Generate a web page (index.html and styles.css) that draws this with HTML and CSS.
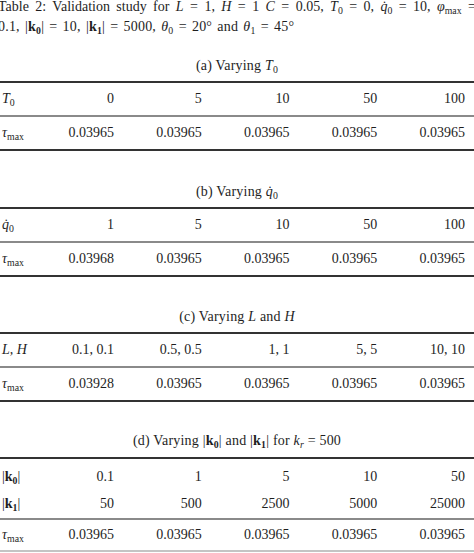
FILE: index.html
```html
<!DOCTYPE html>
<html>
<head>
<meta charset="utf-8">
<link rel="stylesheet" href="styles.css">
</head>
<body>
<div class="page">
  <div class="caption">
    <div class="line1">Table 2: Validation study for <i>L</i> = 1, <i>H</i> = 1 <i>C</i> = 0.05, <i>T</i><sub>0</sub> = 0, <i>q̇</i><sub>0</sub> = 10, <i>φ</i><sub>max</sub> =</div>
    <div class="line2">0.1, |<b>k<sub>0</sub></b>| = 10, |<b>k<sub>1</sub></b>| = 5000, <i>θ</i><sub>0</sub> = 20° and <i>θ</i><sub>1</sub> = 45°</div>
  </div>

  <div class="subcap sub-a">(a) Varying <i>T</i><sub>0</sub></div>
  <div class="tbl">
    <div class="row head"><span class="lbl"><i>T</i><sub>0</sub></span><span>0</span><span>5</span><span>10</span><span>50</span><span>100</span></div>
    <div class="row foot"><span class="lbl"><i>τ</i><sub>max</sub></span><span>0.03965</span><span>0.03965</span><span>0.03965</span><span>0.03965</span><span>0.03965</span></div>
  </div>

  <div class="subcap sub-b">(b) Varying <i>q̇</i><sub>0</sub></div>
  <div class="tbl">
    <div class="row head"><span class="lbl"><i>q̇</i><sub>0</sub></span><span>1</span><span>5</span><span>10</span><span>50</span><span>100</span></div>
    <div class="row foot"><span class="lbl"><i>τ</i><sub>max</sub></span><span>0.03968</span><span>0.03965</span><span>0.03965</span><span>0.03965</span><span>0.03965</span></div>
  </div>

  <div class="subcap sub-c">(c) Varying <i>L</i> and <i>H</i></div>
  <div class="tbl">
    <div class="row head"><span class="lbl"><i>L, H</i></span><span>0.1, 0.1</span><span>0.5, 0.5</span><span>1, 1</span><span>5, 5</span><span>10, 10</span></div>
    <div class="row foot"><span class="lbl"><i>τ</i><sub>max</sub></span><span>0.03928</span><span>0.03965</span><span>0.03965</span><span>0.03965</span><span>0.03965</span></div>
  </div>

  <div class="subcap sub-d">(d) Varying |<b>k<sub>0</sub></b>| and |<b>k<sub>1</sub></b>| for <i>k</i><sub><i>r</i></sub> = 500</div>
  <div class="tbl last">
    <div class="row r1"><span class="lbl">|<b>k<sub>0</sub></b>|</span><span>0.1</span><span>1</span><span>5</span><span>10</span><span>50</span></div>
    <div class="row r2"><span class="lbl">|<b>k<sub>1</sub></b>|</span><span>50</span><span>500</span><span>2500</span><span>5000</span><span>25000</span></div>
    <div class="row foot"><span class="lbl"><i>τ</i><sub>max</sub></span><span>0.03965</span><span>0.03965</span><span>0.03965</span><span>0.03965</span><span>0.03965</span></div>
  </div>
</div>
</body>
</html>
```

FILE: styles.css
```css
html, body {
  margin: 0;
  padding: 0;
  background: #ffffff;
  overflow: hidden;
}

body {
  font-family: "Liberation Serif", "Times New Roman", serif;
  font-size: 14px;
  color: #1e1e1e;
}

.page {
  width: 478px;
  margin: -3px 0 0 -2px;
}

sub {
  font-size: 70%;
  line-height: 0;
  vertical-align: -3px;
}

b sub {
  font-weight: bold;
}

.caption {
  line-height: 20px;
}

.line1 {
  text-align: justify;
  text-align-last: justify;
}

.line2 {
  word-spacing: 1.5px;
  letter-spacing: 0.2px;
}

.subcap {
  text-align: center;
  line-height: 20px;
  margin-bottom: 5px;
  letter-spacing: 0.2px;
}

.sub-a { margin-top: 19px; }
.sub-b { margin-top: 31px; }
.sub-c { margin-top: 30px; }
.sub-d { margin-top: 29px; margin-bottom: 6px; }

.tbl {
  border-top: 2px solid #333333;
  border-bottom: 2px solid #333333;
}

.tbl.last {
  border-bottom-color: #c4c4c4;
}

.row {
  display: grid;
  grid-template-columns: 39.25px repeat(5, 87.75px);
  line-height: 32px;
}

.row span {
  text-align: right;
  padding-right: 11px;
  white-space: nowrap;
}

.row span.lbl {
  text-align: left;
  padding-left: 4px;
  padding-right: 0;
}

.row.foot {
  border-top: 2px solid #8a8a8a;
}

.tbl.last .row.r1 {
  line-height: 28px;
  padding-top: 4px;
}

.tbl.last .row.r2 {
  line-height: 26px;
  padding-bottom: 1px;
}

.tbl.last .row.foot {
  line-height: 30px;
}
```
